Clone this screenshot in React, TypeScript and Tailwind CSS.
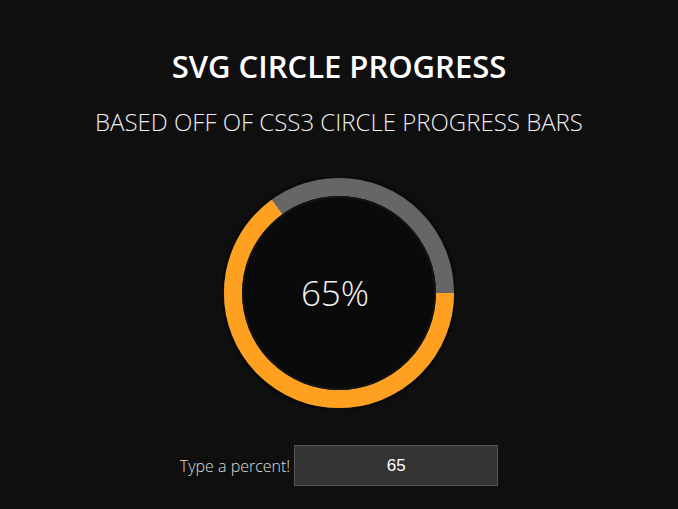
import { useState } from "react";

export default function App() {
  const [value, setValue] = useState("65");
  const pct = Math.max(0, Math.min(100, Number(value) || 0));
  const r = 106;
  const c = 2 * Math.PI * r;

  return (
    <div className="flex min-h-screen flex-col items-center bg-[#0f0f0f] font-['Open_Sans',sans-serif] text-white">
      <h1 className="mt-[45px] text-[31px] font-semibold leading-[42px]">SVG CIRCLE PROGRESS</h1>
      <p className="mt-[18px] text-[24px] font-light leading-[34px] text-[#eeeeee]">
        BASED OFF OF CSS3 CIRCLE PROGRESS BARS
      </p>

      <div className="relative mt-[38px] h-[232px] w-[232px]">
        <svg width="232" height="232" viewBox="0 0 232 232" className="block">
          <defs>
            <filter id="glow" x="-20%" y="-20%" width="140%" height="140%">
              <feGaussianBlur stdDeviation="2" />
            </filter>
          </defs>
          <circle cx="116" cy="116" r="116" fill="#0a0a0a" filter="url(#glow)" />
          <circle cx="116" cy="116" r={r} fill="none" stroke="#666666" strokeWidth="18" />
          <circle
            cx="116"
            cy="116"
            r={r}
            fill="none"
            stroke="#ffa021"
            strokeWidth="18"
            strokeDasharray={`${(c * pct) / 100} ${c}`}
          />
          <circle cx="116" cy="116" r="96" fill="#0a0a0a" stroke="#141414" strokeWidth="2" />
        </svg>
        <div className="absolute inset-0 flex items-center justify-center pr-[8px] text-[35px] font-light text-[#f2f2f2]">
          {pct}%
        </div>
      </div>

      <div className="mt-[36px] flex items-center gap-[4px]">
        <label className="text-[16px] font-light text-[#dddddd]">Type a percent!</label>
        <input
          value={value}
          onChange={(e) => setValue(e.target.value)}
          className="h-[41px] w-[204px] border border-[#555555] bg-[#333333] text-center font-['Liberation_Sans',sans-serif] text-[17px] text-white outline-none"
        />
      </div>
    </div>
  );
}
